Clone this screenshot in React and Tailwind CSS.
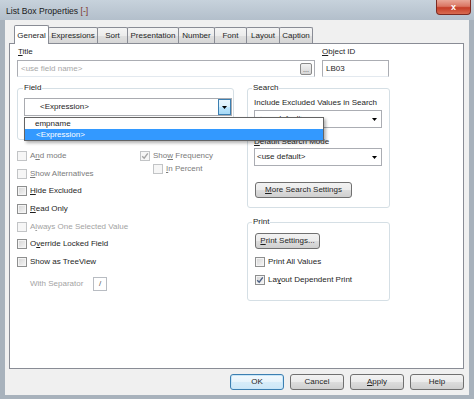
import React from "react";

// Win7-ish dialog pieces
const btn =
  "flex items-center justify-center h-[16px] rounded-[3px] border border-[#707070] bg-[linear-gradient(#f2f2f2_0%,#ebebeb_50%,#dddddd_51%,#cfcfcf_100%)] text-[#1e1e1e] leading-[10px]";

const tabs = [
  { label: "General", w: "w-[35px]", active: true },
  { label: "Expressions", w: "w-[50px]" },
  { label: "Sort", w: "w-[31px]" },
  { label: "Presentation", w: "w-[52px]" },
  { label: "Number", w: "w-[37px]" },
  { label: "Font", w: "w-[33px]" },
  { label: "Layout", w: "w-[34px]" },
  { label: "Caption", w: "w-[34px]" },
];

function Arrow() {
  return (
    <svg width="5" height="3" viewBox="0 0 5 3">
      <path d="M0 0h5L2.5 3z" fill="#000" />
    </svg>
  );
}

function Check({ children, checked, disabled, dim, className = "" }) {
  return (
    <div className={"flex items-center h-[12px] " + className}>
      <span
        className={
          "w-[10px] h-[10px] shrink-0 border flex items-center justify-center " +
          (disabled
            ? "border-[#c2c4c6] bg-[#f6f6f6]"
            : "border-[#8e8f8f] bg-gradient-to-br from-[#d4d4d4] to-[#f7f7f7] shadow-[inset_0_0_0_1px_#f4f4f4]")
        }>
        {checked && (
          <svg viewBox="0 0 8 8" className="w-[8px] h-[8px]">
            <path
              d="M1.2 4.2 L3.2 6.2 L6.8 1.4"
              fill="none"
              stroke={disabled ? "#a4a4a4" : "#4d6185"}
              strokeWidth="1.4"
            />
          </svg>
        )}
      </span>
      <span
        className={
          "ml-[3px] leading-[10px] whitespace-nowrap " +
          (dim ? "text-[#a3a3a3]" : disabled ? "text-[#7b7b7b]" : "text-[#1e1e1e]")
        }>
        {children}
      </span>
    </div>
  );
}

function Combo({ text }) {
  return (
    <div className="h-[18px] w-[128px] border border-[#abadb3] bg-white flex items-center justify-between pl-[2px] pr-[4px]">
      <span className="leading-[10px]">{text}</span>
      <Arrow />
    </div>
  );
}

export default function App() {
  return (
    <div className="w-[474px] h-[399px] flex flex-col bg-[#a8b2bc] font-['Liberation_Sans',Arial,sans-serif] text-[8px] leading-[10px] text-[#1e1e1e] overflow-hidden">
      {/* Title bar */}
      <div className="h-[20px] shrink-0 flex items-start justify-between bg-gradient-to-b from-[#c7d2dc] to-[#b3bfcb]">
        <div className="pl-[6px] pt-[6px] text-[8.6px] leading-[10px] text-[#1a1a1a]">
          List Box Properties <span className="text-[#7d3526]">[-]</span>
        </div>
        <div className="mr-[3px] w-[35px] h-[15px] rounded-b-[4px] border border-t-0 border-[#7c2a21] bg-[linear-gradient(#e9a697_0%,#da7663_45%,#c53d27_55%,#d86b51_100%)] flex items-center justify-center text-white font-bold text-[9px] leading-none">
          x
        </div>
      </div>

      {/* Client area */}
      <div className="flex-1 mx-[5px] mb-[4px] bg-[#f0f0f0] flex flex-col">
        {/* Tabs */}
        <div className="relative z-10 flex items-end h-[19px] mt-[5px] -mb-[1px] pl-[9px]">
          {tabs.map((t, i) =>
            t.active ? (
              <div
                key={t.label}
                className={`relative z-10 ${t.w} h-[19px] bg-white border border-b-0 border-[#898c95] rounded-t-[2px] flex justify-center pt-[5px]`}>
                {t.label}
              </div>
            ) : (
              <div
                key={t.label}
                className={`${t.w} h-[16px] mb-[1px] ${i > 0 ? "-ml-[1px]" : ""} border border-b-0 border-[#898c95] rounded-t-[2px] bg-[linear-gradient(#f4f4f4_0%,#ececec_50%,#e0e0e0_51%,#d6d6d6_100%)] flex items-center justify-center`}>
                {t.label}
              </div>
            )
          )}
        </div>

        {/* Panel */}
        <div className="relative ml-[4px] w-[455px] h-[326px] bg-white border border-[#898c95] pl-[7px] pt-[3px] flex flex-col">
          {/* Title / Object ID */}
          <div className="flex">
            <div className="w-[298px] flex flex-col">
              <div className="h-[13px] pl-[1px]">
                <u>T</u>itle
              </div>
              <div className="h-[17px] border border-[#abadb3] border-b-[#e3e9ef] flex items-center justify-between pl-[3px] pr-[2px]">
                <span className="text-[#a8a8a8]">&lt;use field name&gt;</span>
                <div className="w-[12px] h-[12px] rounded-[2px] border border-[#8a8a8a] bg-[linear-gradient(#f2f2f2,#d6d6d6)] flex items-end justify-center text-[7px] leading-[8px] text-[#444]">
                  ...
                </div>
              </div>
            </div>
            <div className="ml-[7px] w-[67px] flex flex-col">
              <div className="h-[13px]">
                <u>O</u>bject ID
              </div>
              <div className="h-[17px] border border-[#abadb3] border-b-[#e3e9ef] flex items-center pl-[3px]">
                LB03
              </div>
            </div>
          </div>

          {/* Lower area */}
          <div className="flex mt-[6px]">
            {/* Left column */}
            <div className="w-[217px] flex flex-col">
              <fieldset className="border border-[#d5dfe5] rounded-[3px] pl-[6px] pr-[1px] pb-[23px]">
                <legend className="-ml-[1px] px-[1px] leading-[10px]">Field</legend>
                <div className="relative mt-[5px] h-[18px] w-[208px] border border-[#a9abb0] bg-white flex items-center justify-between pl-[15px]">
                  <span>&lt;Expression&gt;</span>
                  <div className="w-[13px] h-[16px] border border-[#3c7fb1] bg-[linear-gradient(#eaf6fd_0%,#d9f0fc_50%,#bee6fd_51%,#a7d9f5_100%)] flex items-center justify-center">
                    <Arrow />
                  </div>
                  {/* open dropdown list */}
                  <div className="absolute z-20 left-[-1px] top-[18px] w-[300px] border border-[#646464] bg-white shadow-[2px_2px_3px_rgba(0,0,0,0.3)] flex flex-col">
                    <div className="h-[11px] flex items-center pl-[10px]">empname</div>
                    <div className="h-[11px] flex items-center pl-[11px] bg-[#3399ff] text-white">
                      &lt;Expression&gt;
                    </div>
                  </div>
                </div>
              </fieldset>

              <div className="flex mt-[10px]">
                <div className="w-[123px] flex flex-col gap-[5.7px]">
                  <Check disabled>
                    A<u>n</u>d mode
                  </Check>
                  <Check disabled>
                    <u>S</u>how Alternatives
                  </Check>
                </div>
                <div className="flex flex-col">
                  <Check disabled checked>
                    Sho<u>w</u> Frequency
                  </Check>
                  <Check disabled className="ml-[13px] mt-[1px]">
                    <u>I</u>n Percent
                  </Check>
                </div>
              </div>
              <div className="flex flex-col gap-[5.7px] mt-[5.7px]">
                <Check>
                  <u>H</u>ide Excluded
                </Check>
                <Check>
                  <u>R</u>ead Only
                </Check>
                <Check disabled dim>
                  A<u>l</u>ways One Selected Value
                </Check>
                <Check>
                  O<u>v</u>erride Locked Field
                </Check>
                <Check>Show as TreeView</Check>
              </div>
              <div className="flex items-center h-[14px] mt-[8.8px] pl-[13px]">
                <span className="w-[63px] text-[#a3a3a3]">With Separator</span>
                <div className="w-[14px] h-[14px] border border-[#b8bcc2] flex items-center justify-center text-[#555]">
                  /
                </div>
              </div>
            </div>

            {/* Right column */}
            <div className="ml-[13px] w-[143px] flex flex-col">
              <fieldset className="border border-[#d5dfe5] rounded-[3px] px-[6px] pb-[9px]">
                <legend className="-ml-[2px] px-[1px] leading-[10px]">Search</legend>
                <div className="mt-[5px] h-[10px] whitespace-nowrap">Include Excluded Values in Search</div>
                <div className="mt-[2px]">
                  <Combo text="<use default>" />
                </div>
                <div className="mt-[9px] h-[10px]">
                  <u>D</u>efault Search Mode
                </div>
                <div className="mt-[1px]">
                  <Combo text="<use default>" />
                </div>
                <div className={btn + " mt-[16px] w-[97px] ml-[1px]"}>
                  <span>
                    <u>M</u>ore Search Settings
                  </span>
                </div>
              </fieldset>

              <fieldset className="mt-[9px] border border-[#d5dfe5] rounded-[3px] px-[6px] pb-[14px]">
                <legend className="-ml-[2px] px-[1px] leading-[10px]">Print</legend>
                <div className={btn + " mt-[6px] w-[65px] ml-[1px]"}>
                  <span>
                    <u>P</u>rint Settings...
                  </span>
                </div>
                <Check className="mt-[7px] ml-[1px]">Print All Values</Check>
                <Check checked className="mt-[6px] ml-[1px]">
                  La<u>y</u>out Dependent Print
                </Check>
              </fieldset>
            </div>
          </div>
        </div>

        {/* Dialog buttons */}
        <div className="flex justify-end gap-[6px] pr-[5px] mt-[5px]">
          <div className="flex items-center justify-center w-[54px] h-[16px] rounded-[3px] border border-[#3c7fb1] bg-[linear-gradient(#f3f9fd_0%,#e6f3fb_50%,#d6ecf9_51%,#cde7f7_100%)] shadow-[inset_0_0_0_1px_#c8e6f8]">
            OK
          </div>
          <div className={btn + " w-[54px]"}>Cancel</div>
          <div className={btn + " w-[54px]"}>
            <span>
              <u>A</u>pply
            </span>
          </div>
          <div className={btn + " w-[54px]"}>Help</div>
        </div>
      </div>
    </div>
  );
}
